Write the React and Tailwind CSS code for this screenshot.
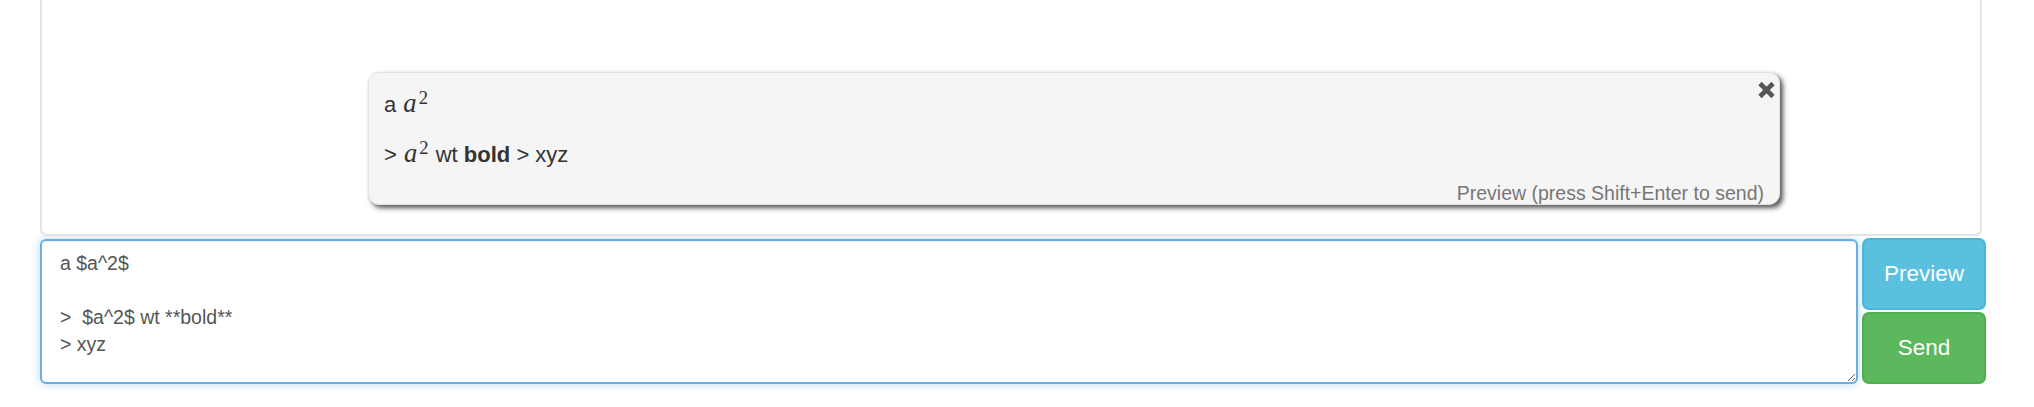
import React from 'react';

const sans = "font-['Liberation_Sans',Arial,sans-serif]";

// a^2 the way KaTeX draws it: serif italic base, upright small exponent
const MathA2 = () => (
  <span className="font-['Liberation_Serif',serif] text-[1.21em] leading-[0] mx-[1px]">
    <span className="italic">a</span>
    <sup className="not-italic text-[0.7em] leading-[0] relative top-[-0.45em] ml-[2px]">2</sup>
  </span>
);

const CloseIcon = () => (
  <svg width="19" height="18" viewBox="0 0 19 18" className="block">
    <path d="M3 2.5 L16 15.5 M16 2.5 L3 15.5" stroke="#555" strokeWidth="4.6" strokeLinecap="butt" fill="none" />
  </svg>
);

const PreviewPopup = () => (
  <div className={`absolute left-[326px] top-[72px] w-[1412px] h-[133px] box-border rounded-[11px] border border-[#e3e3e3] bg-[#f5f5f5] shadow-[3px_3px_5px_#555] pt-[18px] px-[15px] text-[#333] ${sans}`}>
    <button className="absolute right-[3px] top-[8px] cursor-pointer">
      <CloseIcon />
    </button>
    <p className="text-[22px] leading-[27px] h-[27px]">
      a <MathA2 />
    </p>
    <p className="text-[22px] leading-[27px] h-[27px] mt-[23px]">
      &gt; <MathA2 /> wt <b className="font-bold">bold</b> &gt; xyz
    </p>
    <div className="text-[19.5px] leading-[20px] mt-[15px] text-right text-[#777]">
      Preview (press Shift+Enter to send)
    </div>
  </div>
);

export default function App() {
  const draft = 'a $a^2$\n\n>  $a^2$ wt **bold**\n> xyz';

  return (
    <div className={`w-[2034px] h-[407px] bg-white overflow-hidden pl-[40px] ${sans}`}>
      <div className="w-[1946px] flex flex-col">
        <div className="relative w-[1942px] h-[236px] border-2 border-t-0 border-[#e4e4e4] rounded-b-[7px] bg-white">
          <PreviewPopup />
        </div>
        <div className="flex gap-[4px] mt-[2px]">
          <textarea
            readOnly
            value={draft}
            className="mt-[1px] w-[1818px] h-[145px] box-border rounded-[6px] border-2 border-[#66afe9] bg-white pt-[9px] px-[18px] text-[19.5px] leading-[27px] text-[#555] outline-none shadow-[inset_0_1px_1px_rgba(0,0,0,0.075),0_0_10px_rgba(102,175,233,0.45)] font-['Liberation_Sans',Arial,sans-serif]"
          />
          <div className="flex flex-col gap-[2px] w-[124px]">
            <button className="h-[72px] rounded-[7px] border-2 border-[#46b8da] bg-[#5bc0de] text-white text-[22.5px]">
              Preview
            </button>
            <button className="h-[72px] rounded-[7px] border-2 border-[#4cae4c] bg-[#5cb85c] text-white text-[22.5px]">
              Send
            </button>
          </div>
        </div>
      </div>
    </div>
  );
}
